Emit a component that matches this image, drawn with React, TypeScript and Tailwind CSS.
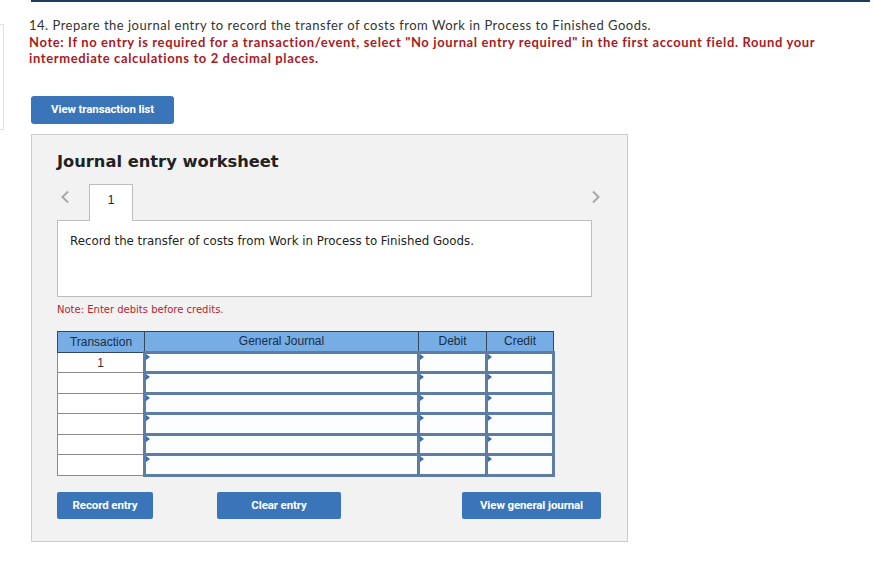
import React from "react";

const rows = [1, 2, 3, 4, 5, 6];

function Marker() {
  return (
    <span className="absolute left-0 top-0 w-0 h-0 border-y-[3px] border-y-transparent border-l-[4px] border-l-[#3b6db4]" />
  );
}

export default function App() {
  return (
    <div className="w-[875px] h-[567px] bg-white flex" style={{ fontFamily: "Lato, 'Liberation Sans', sans-serif" }}>
      {/* cut-off sidebar edge */}
      <div className="w-[4px] shrink-0">
        <div className="mt-[24px] h-[106px] border-y border-r border-[#e2e2e2]" />
      </div>

      <div className="flex-1 pl-[27px]">
        <div className="w-[839px] h-[2px] bg-[#1f3a5c]" />

        {/* Question */}
        <div className="mt-[15px] -ml-[2px] text-[13px] leading-[16.5px]">
          <p className="text-[#333333] tracking-[0.5px]">
            14. Prepare the journal entry to record the transfer of costs from Work in Process to Finished Goods.
          </p>
          <p className="text-[#a81a1f] font-bold tracking-[0.62px]">
            Note: If no entry is required for a transaction/event, select "No journal entry required" in the first account field. Round your intermediate calculations to 2 decimal places.
          </p>
        </div>

        <button className="mt-[29px] w-[143px] h-[28px] rounded-[3px] bg-[#3a74b9] text-white text-[11.5px] font-bold tracking-[-0.01em]" style={{ fontFamily: "Roboto, 'Liberation Sans', sans-serif" }}>
          View transaction list
        </button>

        {/* Worksheet */}
        <div className="mt-[10px] w-[597px] h-[408px] bg-[#f2f2f2] border border-[#cccccc] pl-[25px] pt-[17px]">
          <h2 className="text-[16.3px] font-bold text-[#222222] leading-[20px]" style={{ fontFamily: "'DejaVu Sans', Verdana, sans-serif" }}>
            Journal entry worksheet
          </h2>

          <div className="mt-[12px] w-[545px] flex items-end justify-between">
            <div className="flex items-end">
              <svg width="10" height="14" viewBox="0 0 10 14" className="mb-[16px] ml-[3px]">
                <polyline points="8,1.5 2.5,7 8,12.5" fill="none" stroke="#a8a8a8" strokeWidth="2" />
              </svg>
              <div className="relative z-10 -mb-px ml-[19px] w-[44px] h-[37px] bg-white border-x border-t border-[#bdbdbd] flex justify-center pt-[6px] text-[12px] text-[#222]" style={{ fontFamily: "'Liberation Sans', Arial, sans-serif" }}>
                1
              </div>
            </div>
            <svg width="10" height="14" viewBox="0 0 10 14" className="mb-[16px] mr-[1px]">
              <polyline points="2,1.5 7.5,7 2,12.5" fill="none" stroke="#a8a8a8" strokeWidth="2" />
            </svg>
          </div>

          <div className="w-[535px] h-[77px] bg-white border border-[#bdbdbd] pl-[12px] pt-[12px] text-[11.8px] text-[#222]" style={{ fontFamily: "'DejaVu Sans', Verdana, sans-serif" }}>
            Record the transfer of costs from Work in Process to Finished Goods.
          </div>

          <p className="mt-[7px] text-[10px] leading-[12px] text-[#b7262c]" style={{ fontFamily: "'DejaVu Sans', Verdana, sans-serif" }}>
            Note: Enter debits before credits.
          </p>

          <table className="mt-[15px] border-collapse text-[12px]" style={{ fontFamily: "'Liberation Sans', Arial, sans-serif" }}>
            <thead>
              <tr className="h-[21px] bg-[#75ade4] text-[#1b2c45]">
                <th className="w-[87px] border border-[#34465c] font-normal">Transaction</th>
                <th className="w-[274px] border border-[#34465c] font-normal">General Journal</th>
                <th className="w-[68px] border border-[#34465c] font-normal">Debit</th>
                <th className="w-[67px] border border-[#34465c] font-normal">Credit</th>
              </tr>
            </thead>
            <tbody>
              {rows.map((r) => (
                <tr key={r} className="h-[20.6px]">
                  <td className="border border-[#8a8a8a] bg-white text-center text-[#333] align-top pt-[1px]">{r === 1 ? "1" : ""}</td>
                  <td className="relative border-[3px] border-[#5d7da5] bg-[#fcfdff]"><Marker /></td>
                  <td className="relative border-[3px] border-[#5d7da5] bg-[#fcfdff]"><Marker /></td>
                  <td className="relative border-[3px] border-[#5d7da5] bg-[#fcfdff]"><Marker /></td>
                </tr>
              ))}
            </tbody>
          </table>

          <div className="mt-[15px] w-[544px] flex text-[11.5px] font-bold text-white tracking-[-0.01em]" style={{ fontFamily: "Roboto, 'Liberation Sans', sans-serif" }}>
            <button className="w-[96px] h-[27px] rounded-[2px] bg-[#3a74b9]">Record entry</button>
            <button className="ml-[64px] w-[124px] h-[27px] rounded-[2px] bg-[#3a74b9]">Clear entry</button>
            <button className="ml-auto w-[139px] h-[27px] rounded-[2px] bg-[#3a74b9]">View general journal</button>
          </div>
        </div>
      </div>
    </div>
  );
}
